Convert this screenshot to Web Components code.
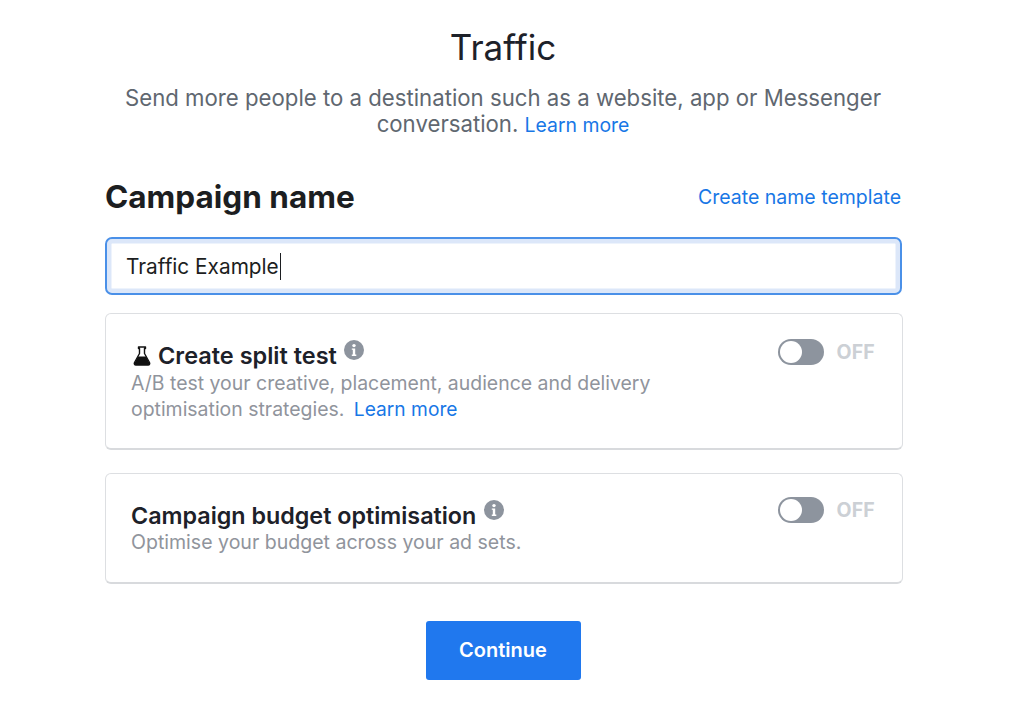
<!DOCTYPE html>
<html>
<head>
<meta charset="utf-8">
<style>
  html, body { margin: 0; background: #fff; }
  body { font-family: Inter, "Liberation Sans", sans-serif; }
</style>
</head>
<body>
<campaign-page></campaign-page>

<script>
const INFO_ICON = `<svg width="20" height="20" viewBox="0 0 20 20" style="display:block"><circle cx="10" cy="10" r="10" fill="#8d949e"/><circle cx="10" cy="5.6" r="1.7" fill="#fff"/><path d="M7.8 8.4h3.4v6.2h1.1v1.4H7.8v-1.4h1V9.8h-1z" fill="#fff"/></svg>`;
const FLASK_ICON = `<svg width="18" height="20" viewBox="0 0 18 20" style="display:block"><path d="M5.5 1h7v1.5h-1v5l5 9c.6 1.2 0 2.5-1.4 2.5H2.9c-1.4 0-2-1.3-1.4-2.5l5-9v-5h-1z" fill="#fff" stroke="#111" stroke-width="1.4" stroke-linejoin="round"/><path d="M5 10.5h8l3.3 6.2c.5 1 0 2.3-1.2 2.3H2.9c-1.2 0-1.7-1.3-1.2-2.3z" fill="#111"/></svg>`;

class FbToggle extends HTMLElement {
  constructor() {
    super();
    this.attachShadow({ mode: 'open' }).innerHTML = `
      <style>
        :host { display: flex; align-items: center; gap: 12px; }
        .track { width: 46px; height: 26px; box-sizing: border-box; border-radius: 13px; background: #8d949e; padding: 2px; }
        .knob { width: 22px; height: 22px; border-radius: 50%; background: #fff; }
        .label { font-size: 19.5px; font-weight: 700; color: #ccd0d5; letter-spacing: 0.2px; }
      </style>
      <div class="track"><div class="knob"></div></div>
      <span class="label">OFF</span>`;
  }
}

class OptionCard extends HTMLElement {
  constructor() {
    super();
    this.attachShadow({ mode: 'open' }).innerHTML = `
      <style>
        :host {
          display: flex;
          justify-content: space-between;
          box-sizing: border-box;
          width: 798px;
          padding: 24px 27px 0 25px;
          border: 1px solid #dddfe2;
          border-bottom: 2px solid #d8dadd;
          border-radius: 6px;
          background: #fff;
        }
        .title { display: flex; align-items: flex-start; margin-top: 2px; font-size: var(--title-size, 23.3px); line-height: 32px; font-weight: 600; color: #1d2129; }
        ::slotted([slot="icon"]) { margin: 6px 7px 0 2px; }
        ::slotted(a) { margin-left: 4px; font-size: 19.2px; }
        .info { margin: 0 0 0 7.5px; height: 20px; }
        .desc { width: 560px; font-size: var(--desc-size, 19.45px); line-height: 26px; color: #90949c; margin-top: var(--desc-top, -2px); }
        fb-toggle { margin-top: var(--toggle-top, -1px); height: 26px; }
      </style>
      <div>
        <div class="title"><slot name="icon"></slot><slot name="title"></slot><span class="info">${INFO_ICON}</span></div>
        <div class="desc"><slot></slot></div>
      </div>
      <fb-toggle></fb-toggle>`;
  }
}

class CampaignPage extends HTMLElement {
  constructor() {
    super();
    this.attachShadow({ mode: 'open' }).innerHTML = `
      <style>
        :host { display: block; width: 1024px; height: 722px; box-sizing: border-box; padding: 24px 0 0 105px; color: #1c1e21; overflow: hidden; }
        .main { width: 798px; display: flex; flex-direction: column; }
        h1 { margin: 0 2px 0 0; text-align: center; font-size: 35px; line-height: 46px; font-weight: 400; color: #1d2129; }
        .sub { margin: 15px 0 0 13px; width: 770px; text-align: center; font-size: 22.2px; line-height: 26px; color: #606770; }
        .sub a { font-size: 19.4px; }
        a { color: #1877e6; text-decoration: none; }
        .name-head { display: flex; justify-content: space-between; align-items: center; margin-top: 39px; }
        h2 { margin: 0; font-size: 31.5px; line-height: 40px; font-weight: 700; color: #1c1e21; }
        .name-head a { font-size: 19.5px; margin-right: 2px; }
        .input {
          box-sizing: border-box;
          width: 797px;
          height: 58px;
          margin-top: 20px;
          padding: 0 16px 0 19px;
          display: flex;
          align-items: center;
          border: 2px solid #4a90e8;
          border-radius: 7px;
          box-shadow: inset 0 0 0 4.5px #dce7f9;
          font-size: 20.8px;
          color: #1c1e21;
        }
        .caret { width: 1.5px; height: 27px; background: #1c1e21; margin-left: 1px; }
        .split { margin-top: 18px; height: 137px; --toggle-top: 1px; --title-size: 23.5px; }
        .budget { margin-top: 23px; height: 111px; --desc-top: -3px; --desc-size: 19.55px; }
        .actions { display: flex; justify-content: center; margin: 37px 2px 0 0; }
        .actions a { width: 155px; height: 59px; display: flex; align-items: center; justify-content: center; padding-bottom: 1px; box-sizing: border-box; background: #2078ee; color: #fff; border-radius: 3px; font-size: 20px; font-weight: 600; }
      </style>
      <div class="main">
        <h1>Traffic</h1>
        <div class="sub">Send more people to a destination such as a website, app or Messenger conversation. <a>Learn more</a></div>
        <div class="name-head"><h2>Campaign name</h2><a>Create name template</a></div>
        <div class="input"><span>Traffic Example</span><span class="caret"></span></div>
        <option-card class="split">
          <span slot="icon">${FLASK_ICON}</span>
          <span slot="title">Create split test</span>
          A/B test your creative, placement, audience and delivery optimisation strategies. <a>Learn more</a>
        </option-card>
        <option-card class="budget">
          <span slot="title">Campaign budget optimisation</span>
          Optimise your budget across your ad sets.
        </option-card>
        <div class="actions"><a>Continue</a></div>
      </div>`;
  }
}

customElements.define('fb-toggle', FbToggle);
customElements.define('option-card', OptionCard);
customElements.define('campaign-page', CampaignPage);
</script>
</body>
</html>
